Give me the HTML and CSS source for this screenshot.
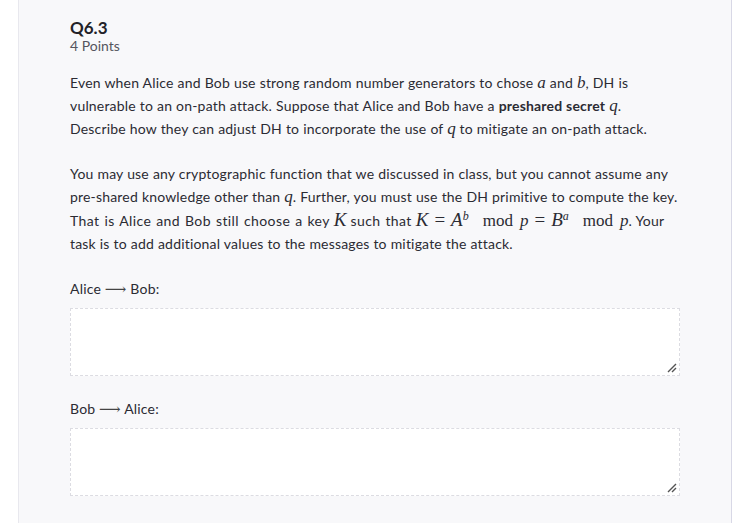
FILE: index.html
```html
<!DOCTYPE html>
<html lang="en">
<head>
<meta charset="utf-8">
<title>Q6.3</title>
<link rel="stylesheet" href="styles.css">
</head>
<body>
<main class="panel">
  <header class="q-head">
    <h2 class="q-title">Q6.3</h2>
    <div class="q-points">4 Points</div>
  </header>
  <p class="q-text">Even when Alice and Bob use strong random number generators to chose <span class="m">a</span> and <span class="m">b</span>, DH is<br> vulnerable to an on-path attack. Suppose that Alice and Bob have a <strong>preshared secret</strong> <span class="m">q</span>.<br> Describe how they can adjust DH to incorporate the use of <span class="m">q</span> to mitigate an on-path attack.</p>
  <p class="q-text">You may use any cryptographic function that we discussed in class, but you cannot assume any<br> pre&#8209;shared knowledge other than <span class="m">q</span>. Further, you must use the DH primitive to compute the key.<br> <span class="wide">That is Alice and Bob still choose a key</span> <span class="m big">K</span> <span class="wide">such that</span> <span class="nw"><span class="m big">K</span><span class="rel">=</span><span class="m big">A</span><sup class="m">b</sup><span class="mod">mod</span><span class="m">p</span><span class="rel">=</span><span class="m big">B</span><sup class="m">a</sup><span class="mod">mod</span><span class="m">p</span></span>. Your<br> task is to add additional values to the messages to mitigate the attack.</p>
  <label class="q-label">Alice <span class="arrow">&#x27F6;</span> Bob:</label>
  <div class="q-field">
    <textarea class="q-input"></textarea>
    <svg class="grip" width="10" height="10" viewBox="0 0 10 10"><path d="M1 9 L9 1 M5 9 L9 5" stroke="#555" stroke-width="1.4" fill="none"/></svg>
  </div>
  <label class="q-label">Bob <span class="arrow">&#x27F6;</span> Alice:</label>
  <div class="q-field">
    <textarea class="q-input"></textarea>
    <svg class="grip" width="10" height="10" viewBox="0 0 10 10"><path d="M1 9 L9 1 M5 9 L9 5" stroke="#555" stroke-width="1.4" fill="none"/></svg>
  </div>
</main>
</body>
</html>
```
FILE: styles.css
```css
html, body {
  margin: 0;
  padding: 0;
  background: #ffffff;
}
body {
  font-family: Lato, "Open Sans", sans-serif;
  color: #2b2b33;
}
.panel {
  margin-left: 18px;
  width: 610px;
  min-height: 523px;
  box-sizing: content-box;
  padding: 18px 51px 0 51px;
  background: #f8f8fa;
  border-left: 1px solid #e8e8ee;
  border-right: 1px solid #d8d8e6;
}
.q-head {
  margin-bottom: 16px;
}
.q-title {
  margin: 0;
  font-size: 17px;
  line-height: 19px;
  font-weight: 700;
  color: #222228;
}
.q-points {
  font-size: 14px;
  line-height: 18px;
  color: #55555e;
}
.q-text {
  margin: 0 0 22px 0;
  font-size: 14px;
  line-height: 23px;
  letter-spacing: 0.18px;
  word-spacing: 0.2px;
}
.q-text strong {
  font-weight: 700;
}
.wide {
  letter-spacing: 0.4px;
  word-spacing: 1px;
}
.nw {
  white-space: nowrap;
}
.m {
  font-family: "Liberation Serif", "DejaVu Serif", serif;
  font-style: italic;
  font-size: 17px;
  letter-spacing: 0;
  word-spacing: 0;
}
.m.big {
  font-size: 19px;
}
sup.m {
  font-size: 12px;
  vertical-align: 6px;
  line-height: 0;
}
.rel {
  font-family: "Liberation Serif", serif;
  font-size: 19px;
  margin: 0 6px;
  letter-spacing: 0;
}
.mod {
  font-family: "Liberation Serif", serif;
  font-size: 17px;
  margin: 0 7px 0 14px;
  letter-spacing: 0;
}
.q-label {
  display: block;
  font-size: 14px;
  line-height: 23px;
  letter-spacing: 0.2px;
  margin-bottom: 8px;
}
.arrow {
  font-family: "DejaVu Serif", serif;
  font-weight: 300;
  color: #444;
  font-size: 15px;
  line-height: 0;
}
.q-field {
  position: relative;
  width: 610px;
  margin: 0 0 21px 0;
}
.q-input {
  display: block;
  box-sizing: border-box;
  width: 610px;
  height: 68px;
  padding: 6px 8px;
  border: 1px dashed #dcdce2;
  background: #ffffff;
  font-family: Lato, sans-serif;
  font-size: 14px;
  outline: none;
  resize: none;
}
.grip {
  position: absolute;
  right: 3px;
  bottom: 3px;
}
```
